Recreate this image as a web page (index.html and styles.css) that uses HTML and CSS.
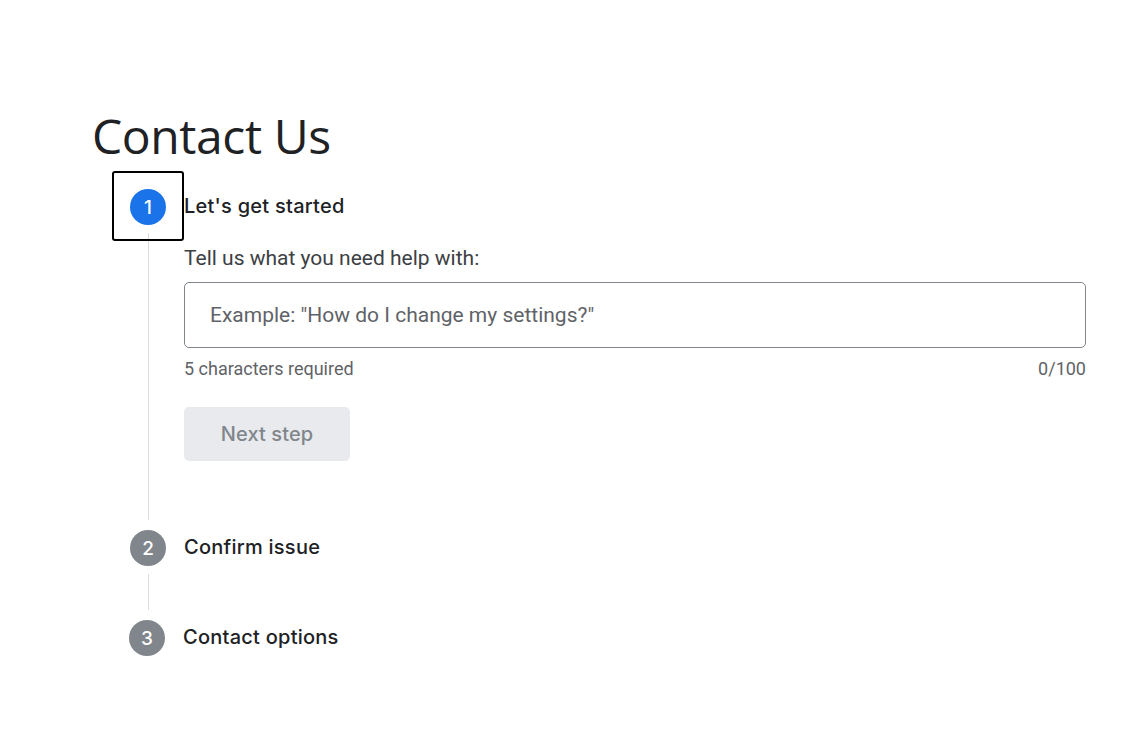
FILE: index.html
```html
<!DOCTYPE html>
<html lang="en">
<head>
<meta charset="utf-8">
<title>Contact Us</title>
<link rel="stylesheet" href="styles.css">
</head>
<body>
<main class="page">
  <h1 class="title">Contact Us</h1>
  <ol class="stepper">
    <li class="step step-active">
      <div class="rail">
        <span class="badge badge-blue focused">1</span>
        <span class="line line-long"></span>
      </div>
      <div class="content">
        <div class="step-title">Let's get started</div>
        <label class="label" for="q">Tell us what you need help with:</label>
        <input id="q" class="field" type="text" placeholder="Example: &quot;How do I change my settings?&quot;">
        <div class="helper"><span>5 characters required</span><span>0/100</span></div>
        <button class="btn" type="button" disabled>Next step</button>
      </div>
    </li>
    <li class="step">
      <div class="rail">
        <span class="badge">2</span>
        <span class="line line-short"></span>
      </div>
      <div class="content content-empty">
        <div class="step-title">Confirm issue</div>
      </div>
    </li>
    <li class="step step-last">
      <div class="rail">
        <span class="badge badge-shift">3</span>
      </div>
      <div class="content">
        <div class="step-title step-title-shift">Contact options</div>
      </div>
    </li>
  </ol>
</main>
</body>
</html>
```

FILE: styles.css
```css
html, body {
  margin: 0;
  padding: 0;
  background: #fff;
}

.page {
  padding: 108px 49px 0 94px;
  font-family: Roboto, "Liberation Sans", sans-serif;
  color: #202124;
}

.title {
  margin: 0 0 0 -2px;
  font-family: "Open Sans", "Noto Sans", sans-serif;
  font-weight: 400;
  font-size: 48px;
  line-height: 56px;
  letter-spacing: -0.4px;
  color: #202124;
}

.stepper {
  list-style: none;
  margin: 25px 0 0 18px;
  padding: 0;
}

.step {
  display: grid;
  grid-template-columns: 72px 1fr;
}

.rail {
  display: flex;
  flex-direction: column;
  align-items: center;
}

.badge {
  position: relative;
  width: 36px;
  height: 36px;
  border-radius: 50%;
  background: #80868b;
  color: #fff;
  display: flex;
  align-items: center;
  justify-content: center;
  font-family: Inter, "Open Sans", sans-serif;
  font-size: 19px;
  font-weight: 500;
  flex: none;
}

.badge-blue {
  background: #1a73e8;
}

.badge-shift {
  margin-left: -2px;
}

.focused::after {
  content: "";
  position: absolute;
  left: -18px;
  top: -18px;
  width: 68px;
  height: 66px;
  border: 2px solid #000;
  border-radius: 3px;
}

.line {
  width: 1px;
  background: #dadce0;
  flex: 1;
  margin: 8px 0 10px;
}

.content {
  display: flex;
  flex-direction: column;
  align-items: flex-start;
  min-width: 0;
}

.step-active .content {
  padding-bottom: 69px;
}

.content-empty {
  min-height: 90px;
}

.step-title {
  height: 36px;
  display: flex;
  align-items: center;
  font-family: Inter, "Open Sans", sans-serif;
  font-size: 20px;
  font-weight: 500;
  color: #202124;
  letter-spacing: 0.25px;
  margin-top: -1px;
  margin-bottom: 1px;
}

.step-title-shift {
  margin-left: -1px;
}

.label {
  margin-top: 18px;
  font-size: 21px;
  line-height: 30px;
  color: #3c4043;
}

.field {
  box-sizing: border-box;
  width: 100%;
  height: 66px;
  margin-top: 9px;
  padding: 0 25px;
  border: 1px solid #80868b;
  border-radius: 5px;
  font-family: Roboto, "Liberation Sans", sans-serif;
  font-size: 21px;
  color: #202124;
  background: #fff;
  outline: none;
}

.field::placeholder {
  color: #5f6368;
  opacity: 1;
}

.helper {
  width: 100%;
  display: flex;
  justify-content: space-between;
  margin-top: 9px;
  font-size: 18px;
  line-height: 24px;
  color: #5f6368;
}

.btn {
  margin-top: 26px;
  width: 166px;
  height: 54px;
  border: none;
  border-radius: 5px;
  background: #e8eaed;
  color: #80868b;
  font-family: Inter, "Open Sans", sans-serif;
  font-size: 20px;
  font-weight: 500;
  letter-spacing: 0.1px;
  padding: 0;
}
```
